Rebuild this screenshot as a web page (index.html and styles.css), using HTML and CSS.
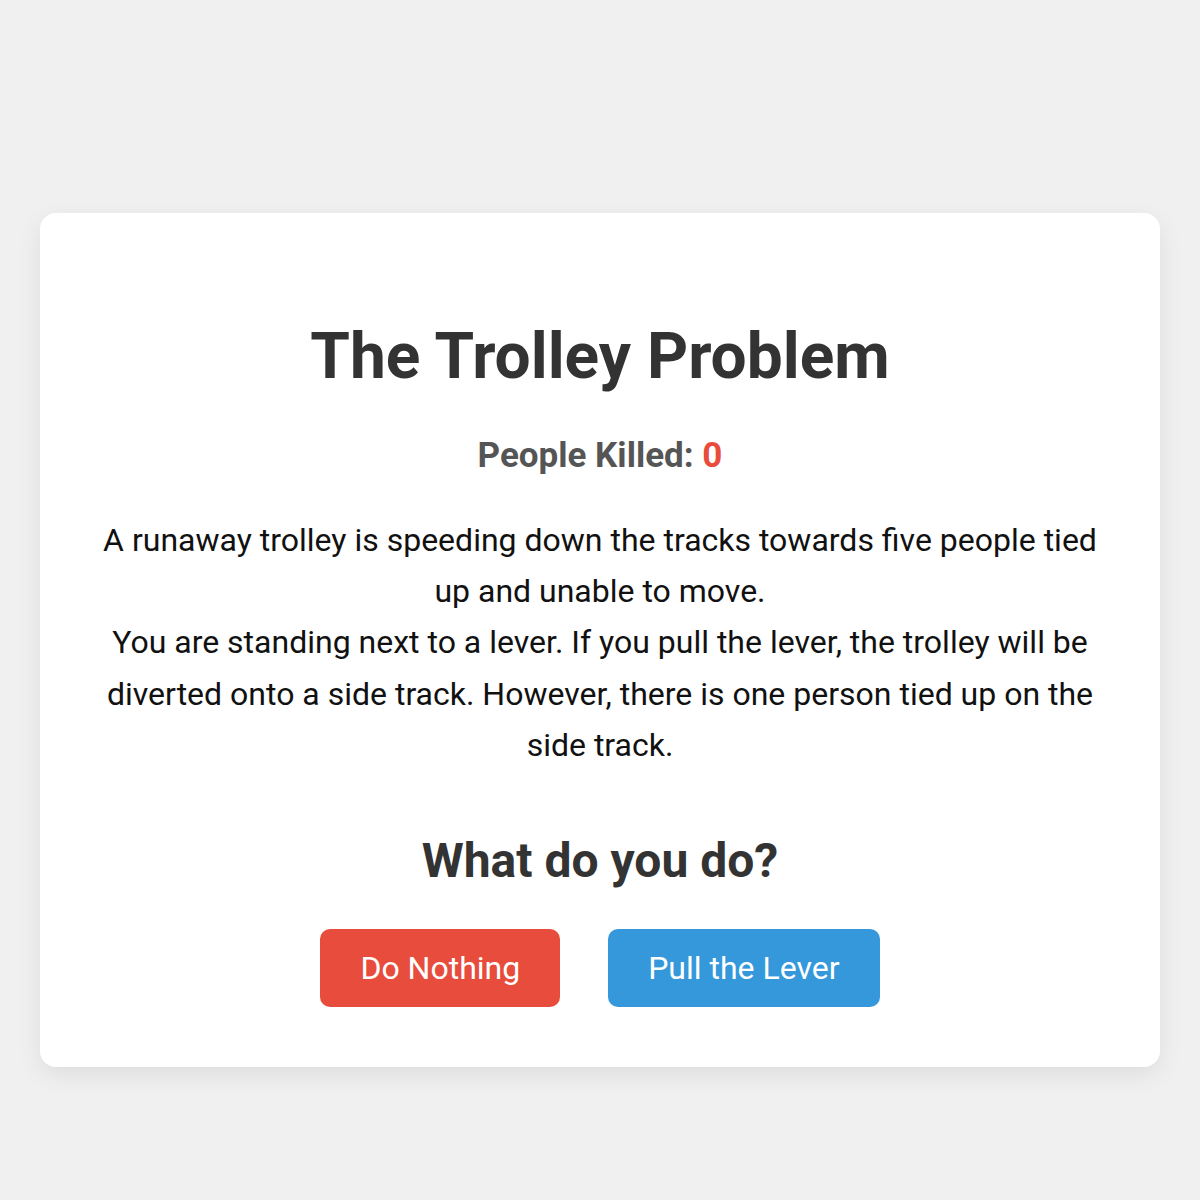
FILE: index.html
```html
<!DOCTYPE html>
<html lang="en">
<head>
<meta charset="utf-8">
<title>The Trolley Problem</title>
<link rel="stylesheet" href="styles.css">
</head>
<body>
  <main class="card">
    <h1 class="title">The Trolley Problem</h1>
    <p class="score">People Killed: <span class="score-count">0</span></p>
    <p class="scenario">A runaway trolley is speeding down the tracks towards five people tied up and unable to move.<br>You are standing next to a lever. If you pull the lever, the trolley will be diverted onto a side track. However, there is one person tied up on the side track.</p>
    <h2 class="question">What do you do?</h2>
    <div class="choices">
      <button class="btn btn-nothing" type="button">Do Nothing</button>
      <button class="btn btn-lever" type="button">Pull the Lever</button>
    </div>
  </main>
</body>
</html>
```
FILE: styles.css
```css
html, body {
  margin: 0;
}

body {
  background: #f0f0f0;
  font-family: Roboto, "Liberation Sans", Arial, sans-serif;
  color: #111;
  min-height: 1200px;
  box-sizing: border-box;
  padding: 80px 40px 0;
  display: flex;
  justify-content: center;
  align-items: center;
}

.card {
  width: 1120px;
  box-sizing: border-box;
  background: #fff;
  border-radius: 16px;
  padding: 60px;
  box-shadow: 0 8px 24px rgba(0, 0, 0, 0.08);
  text-align: center;
}

.title {
  font-size: 64px;
  font-weight: 700;
  color: #333;
  margin: 46px 0 41px;
}

.score {
  font-size: 35px;
  font-weight: 700;
  color: #555;
  margin: 0 0 39px;
}

.score-count {
  color: #e74c3c;
}

.scenario {
  font-size: 32px;
  line-height: 1.6;
  margin: 0 0 61px;
}

.question {
  font-size: 48px;
  font-weight: 700;
  color: #333;
  margin: 0 0 40px;
}

.choices {
  display: flex;
  justify-content: center;
  gap: 48px;
}

.btn {
  font-family: inherit;
  font-size: 32px;
  color: #fff;
  border: none;
  border-radius: 10px;
  padding: 20px 40px;
}

.btn-nothing {
  background: #e74c3c;
}

.btn-lever {
  background: #3498db;
}
```
